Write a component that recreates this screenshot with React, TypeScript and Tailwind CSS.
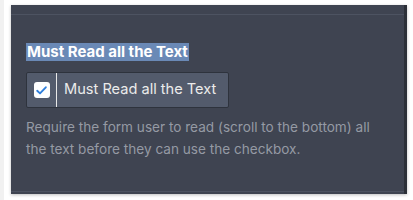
export default function App() {
  return (
    <div className="w-[413px] h-[200px] bg-white pt-[5px] pl-[11px] pr-[6px] overflow-hidden font-['Inter',sans-serif] relative">
      <div className="absolute left-0 top-0 bottom-0 w-[4px] bg-[#f1f1f1]" />
      <div className="flex h-[189px] shadow-[0_1px_3px_rgba(0,0,0,0.25)]">
        <div className="flex-1 bg-[#3f4451] flex flex-col">
          <div className="h-[10px] border-b border-[#4d5361]" />
          <div className="flex-1 pl-[15px] pt-[28px]">
            <h3 className="w-fit bg-[#6a89b6] text-white font-bold text-[15px] leading-[18px] px-[1px]">
              Must Read all the Text
            </h3>
            <label className="mt-[11px] flex items-stretch w-[203px] h-[36px] bg-[#535b6c] border border-[#2e333d] rounded-[2px]">
              <span className="flex items-center justify-center w-[30px] border-r border-[#e8e8e8]">
                <span className="w-[16px] h-[16px] bg-white rounded-[3px] flex items-center justify-center">
                  <svg width="11" height="9" viewBox="0 0 11 9" fill="none">
                    <path d="M1.2 4.8 L4 7.4 L9.8 1.3" stroke="#2f7fdc" strokeWidth="1.9" strokeLinecap="round" strokeLinejoin="round" />
                  </svg>
                </span>
              </span>
              <span className="flex items-center pl-[7px] text-[14.6px] text-[#ebebeb]">Must Read all the Text</span>
            </label>
            <p className="mt-[8px] text-[13.6px] leading-[22px] text-[#959aa4] w-[356px]">
              Require the form user to read (scroll to the bottom) all the text before they can use the checkbox.
            </p>
          </div>
          <div className="h-[3px] border-t border-[#4d5361]" />
        </div>
        <div className="w-[3px] bg-[#2c3038]" />
      </div>
    </div>
  );
}
